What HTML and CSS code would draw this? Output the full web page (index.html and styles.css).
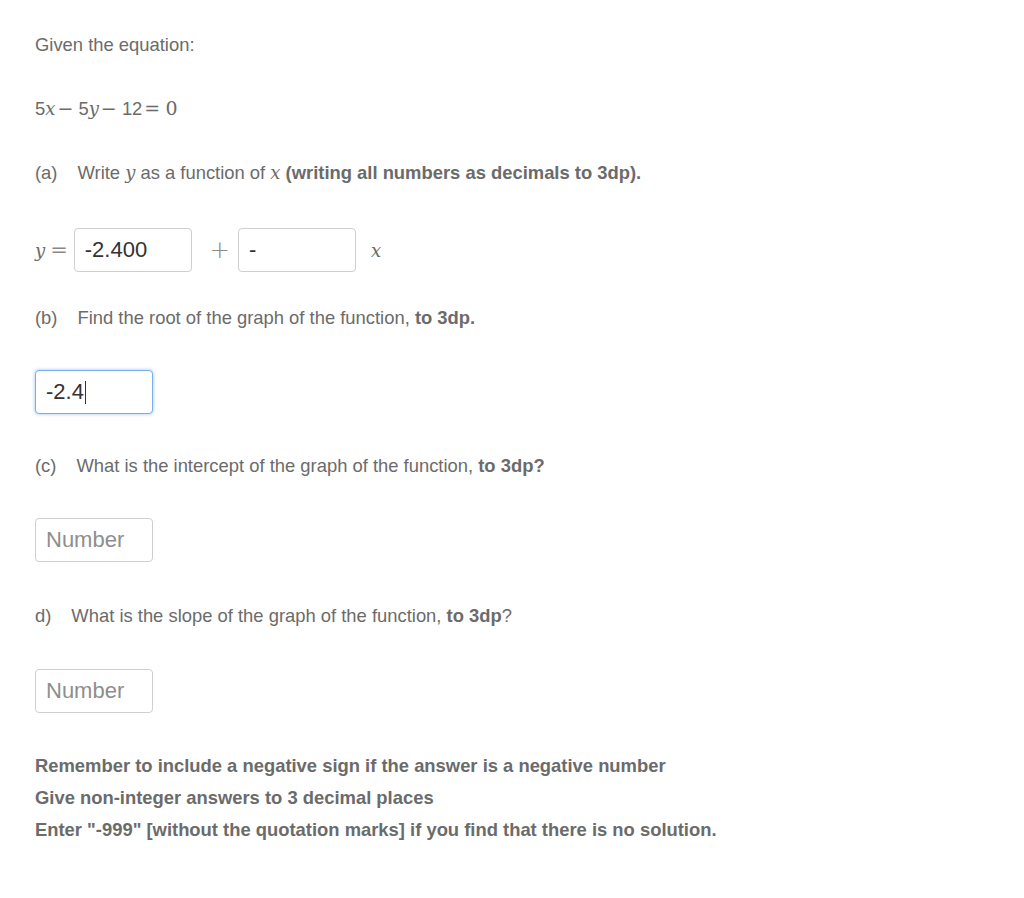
FILE: index.html
```html
<!DOCTYPE html>
<html>
<head>
<meta charset="utf-8">
<link rel="stylesheet" href="styles.css">
</head>
<body>
<div class="page">
  <p class="line intro">Given the equation:</p>
  <p class="line eq"><span>5</span><i class="m">x</i><span class="op">−</span> <span>5</span><i class="m">y</i><span class="op">−</span> <span>12</span><span class="op">=</span> <span class="mn">0</span></p>

  <p class="line q qa"><span class="lbl">(a)</span>Write <i class="m">y</i> as a function of <i class="m">x</i> <b>(writing all numbers as decimals to 3dp).</b></p>
  <div class="row rowa">
    <span class="mrow"><i class="m">y</i><span class="op eqs">=</span></span>
    <input class="box" type="text" value="-2.400">
    <span class="plus">+</span>
    <input class="box" type="text" value="-">
    <i class="m xv">x</i>
  </div>

  <p class="line q qb"><span class="lbl">(b)</span>Find the root of the graph of the function, <b>to 3dp.</b></p>
  <div class="row"><input class="box focus" type="text" value="-2.4"><span class="caret"></span></div>

  <p class="line q"><span class="lbl">(c)</span>What is the intercept of the graph of the function, <b>to 3dp?</b></p>
  <div class="row"><input class="box" type="text" placeholder="Number"></div>

  <p class="line q qd"><span class="lbl">d)</span>What is the slope of the graph of the function, <b>to 3dp</b>?</p>
  <div class="row rowd"><input class="box" type="text" placeholder="Number"></div>

  <div class="notes">
    <p>Remember to include a negative sign if the answer is a negative number</p>
    <p>Give non-integer answers to 3 decimal places</p>
    <p>Enter "-999" [without the quotation marks] if you find that there is no solution.</p>
  </div>
</div>
</body>
</html>
```

FILE: styles.css
```css
html, body {
  margin: 0;
  padding: 0;
  background: #ffffff;
}
.page {
  padding: 33px 0 0 35px;
  font-family: "Liberation Sans", Arial, sans-serif;
  font-size: 18.4px;
  color: #6b6b6b;
}
.line {
  margin: 0;
  line-height: 24px;
  height: 24px;
  white-space: nowrap;
}
.eq {
  margin-top: 39px;
}
.m {
  font-family: "DejaVu Serif", "Liberation Serif", serif;
  font-style: italic;
  font-size: 18px;
}
.op, .mn {
  font-family: "DejaVu Serif", "Liberation Serif", serif;
  font-size: 19px;
}
.op {
  margin-left: 2px;
}
.q {
  margin-top: 40px;
}
.qa {
  margin-top: 41px;
}
.qb {
  margin-top: 34px;
}
.qd {
  margin-top: 42px;
}
.lbl {
  display: inline-block;
  margin-right: 20px;
}
.q b {
  font-weight: bold;
}
.row {
  margin-top: 40px;
  display: flex;
  align-items: center;
  height: 44px;
  position: relative;
}
.rowa {
  margin-top: 43px;
}
.rowd {
  margin-top: 41px;
}
.mrow {
  display: inline-flex;
  align-items: center;
  margin-right: 6px;
}
.eqs {
  margin-left: 5px;
  font-size: 21px;
  color: #888;
}
.box {
  box-sizing: border-box;
  width: 118px;
  height: 44px;
  margin: 0;
  padding: 0 10px;
  border: 1px solid #cfcfcf;
  border-radius: 4px;
  font-family: "Liberation Sans", Arial, sans-serif;
  font-size: 22px;
  color: #333333;
  background: #fff;
  outline: none;
}
.box::placeholder {
  color: #8e8e8e;
}
.box.focus {
  border-color: #7aaee8;
  box-shadow: 0 0 3px 1px rgba(122, 174, 232, 0.45);
}
.plus {
  font-family: "DejaVu Sans", "Liberation Sans", sans-serif;
  font-weight: 200;
  font-size: 24px;
  color: #8a8a8a;
  margin: 0 8px 0 18px;
}
.xv {
  margin-left: 15px;
}
.caret {
  position: absolute;
  left: 50px;
  top: 11px;
  width: 1px;
  height: 23px;
  background: #333;
}
.notes {
  margin-top: 37px;
  font-weight: bold;
  font-size: 18.4px;
  color: #6b6b6b;
}
.notes p {
  margin: 0;
  line-height: 32px;
  white-space: nowrap;
}
```
